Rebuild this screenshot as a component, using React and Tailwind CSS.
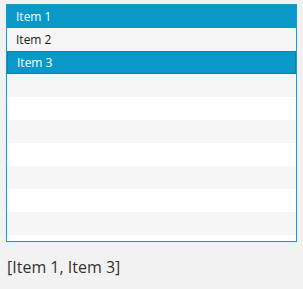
import React from 'react';

const items = ['Item 1', 'Item 2', 'Item 3'];
const selected = [0, 2];
const focused = 2;

export default function App() {
    const rows = Array.from({ length: 11 }, (_, i) => i);

    return (
        <div className="w-[303px] h-[289px] bg-[#f2f2f2] pt-[4px] pl-[6px]" style={{ fontFamily: '"Open Sans", "Noto Sans", sans-serif' }}>
            {/* List box */}
            <div className="w-[291px] h-[238px] border border-[#1b9bc8] bg-white overflow-hidden shadow-[0_0_0_1px_#e3f3fa]">
                {rows.map((i) => {
                    const isSel = selected.includes(i);
                    const isFocus = i === focused;
                    const label = items[i] || '';
                    let cls = i % 2 === 1 ? 'bg-[#f6f6f6] text-[#1a1a1a]' : 'bg-white text-[#1a1a1a]';
                    if (isSel) cls = 'bg-[#0a98c9] text-white';
                    return (
                        <div
                            key={i}
                            className={`h-[23px] flex items-center pl-[9px] text-[12px] leading-none ${cls} ${isFocus ? 'border border-[#1a7ea3] pl-[8px]' : ''}`}
                        >
                            {label}
                        </div>
                    );
                })}
            </div>

            {/* Selection output */}
            <div className="mt-[17px] ml-[1px] text-[16px] text-[#333333] leading-none">[Item 1, Item 3]</div>
        </div>
    );
}
